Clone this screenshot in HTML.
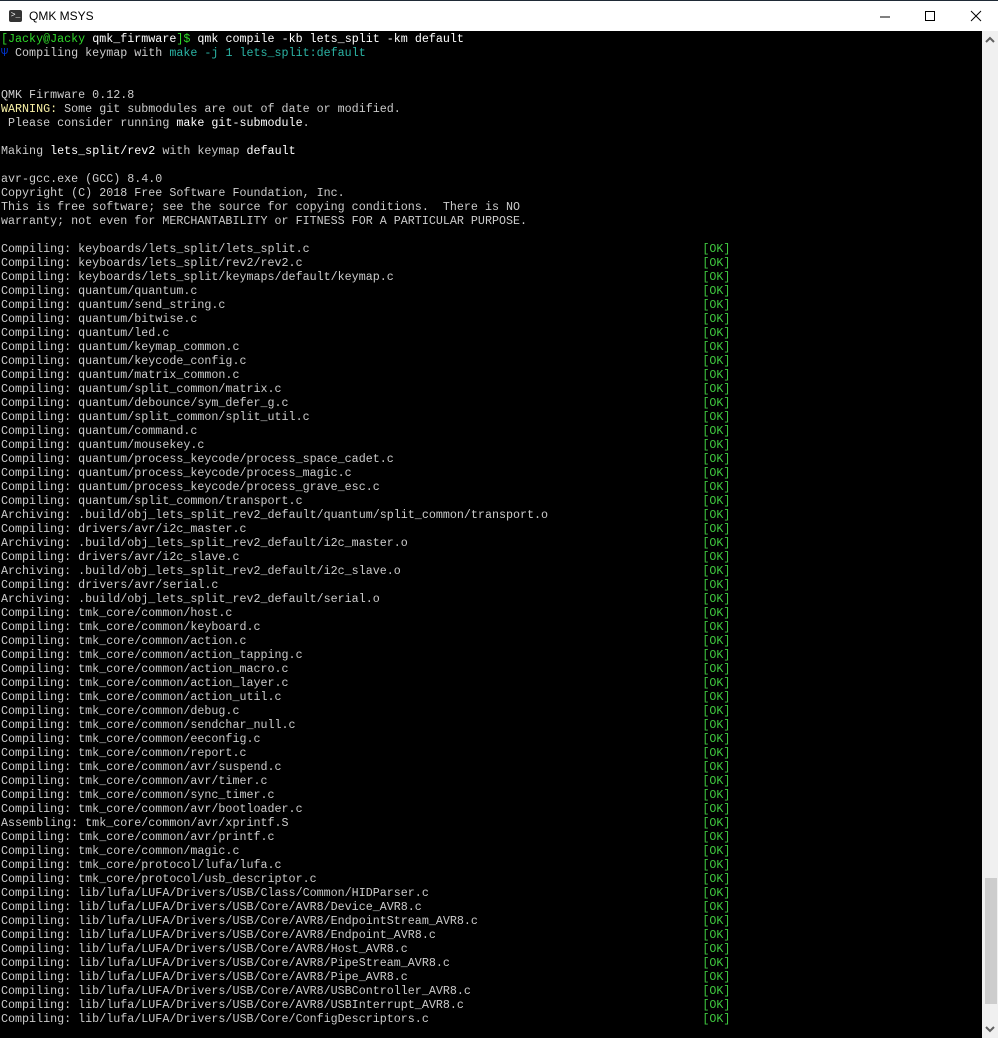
<!DOCTYPE html>
<html><head><meta charset="utf-8"><style>
html,body{margin:0;padding:0;width:998px;height:1038px;overflow:hidden;background:#000;}
#title{position:absolute;left:0;top:0;width:998px;height:31px;background:#fff;border-top:1px solid #1f2a36;box-sizing:border-box;font-family:"Liberation Sans",sans-serif;font-size:12px;color:#000;}
#title .ic{position:absolute;left:9px;top:9px;width:13px;height:12px;background:#333;border-radius:2px;color:#fff;font-size:8px;line-height:12px;font-family:"Liberation Mono",monospace;text-align:center}
#title .t{position:absolute;left:29px;top:8px;}
#term{position:absolute;left:0;top:32px;width:982px;height:1006px;background:#000;}
pre{margin:0;padding-left:1px;font-family:"Liberation Mono",monospace;font-size:11.69px;line-height:14px;color:#cccccc;white-space:pre;}
.g{color:#2fd82a}.c{color:#2bb3a4}.y{color:#f9f1a5}.w{color:#fff}.b{color:#0037da}.ok{color:#3fc83f}
#sb{position:absolute;left:982px;top:31px;width:16px;height:1007px;background:#f0f0f0;}
#thumb{position:absolute;left:985px;top:878px;width:12px;height:126px;background:#cdcdcd;}
</style></head><body>
<div id="title"><div class="ic">&gt;_</div><div class="t">QMK MSYS</div>
<svg style="position:absolute;left:870px;top:9px" width="120" height="14">
<line x1="10" y1="7" x2="20" y2="7" stroke="#000" stroke-width="1"/>
<rect x="55.5" y="1.5" width="9" height="9" fill="none" stroke="#000"/>
<line x1="101" y1="1" x2="111" y2="11" stroke="#000"/><line x1="111" y1="1" x2="101" y2="11" stroke="#000"/>
</svg></div>
<div id="term"><pre><span class="g">[Jacky@Jacky</span> <span class="w">qmk_firmware</span><span class="g">]$</span> <span class="w">qmk compile -kb lets_split -km default</span>
<span class="b">Ψ</span> Compiling keymap with <span class="c">make -j 1 lets_split:default</span>


QMK Firmware 0.12.8
<span class="y">WARNING:</span> Some git submodules are out of date or modified.
 Please consider running <span class="w">make git-submodule</span>.

Making <span class="w">lets_split/rev2</span> with keymap <span class="w">default</span>

avr-gcc.exe (GCC) 8.4.0
Copyright (C) 2018 Free Software Foundation, Inc.
This is free software; see the source for copying conditions.  There is NO
warranty; not even for MERCHANTABILITY or FITNESS FOR A PARTICULAR PURPOSE.

Compiling: keyboards/lets_split/lets_split.c                                                        <span class="ok">[OK]</span>
Compiling: keyboards/lets_split/rev2/rev2.c                                                         <span class="ok">[OK]</span>
Compiling: keyboards/lets_split/keymaps/default/keymap.c                                            <span class="ok">[OK]</span>
Compiling: quantum/quantum.c                                                                        <span class="ok">[OK]</span>
Compiling: quantum/send_string.c                                                                    <span class="ok">[OK]</span>
Compiling: quantum/bitwise.c                                                                        <span class="ok">[OK]</span>
Compiling: quantum/led.c                                                                            <span class="ok">[OK]</span>
Compiling: quantum/keymap_common.c                                                                  <span class="ok">[OK]</span>
Compiling: quantum/keycode_config.c                                                                 <span class="ok">[OK]</span>
Compiling: quantum/matrix_common.c                                                                  <span class="ok">[OK]</span>
Compiling: quantum/split_common/matrix.c                                                            <span class="ok">[OK]</span>
Compiling: quantum/debounce/sym_defer_g.c                                                           <span class="ok">[OK]</span>
Compiling: quantum/split_common/split_util.c                                                        <span class="ok">[OK]</span>
Compiling: quantum/command.c                                                                        <span class="ok">[OK]</span>
Compiling: quantum/mousekey.c                                                                       <span class="ok">[OK]</span>
Compiling: quantum/process_keycode/process_space_cadet.c                                            <span class="ok">[OK]</span>
Compiling: quantum/process_keycode/process_magic.c                                                  <span class="ok">[OK]</span>
Compiling: quantum/process_keycode/process_grave_esc.c                                              <span class="ok">[OK]</span>
Compiling: quantum/split_common/transport.c                                                         <span class="ok">[OK]</span>
Archiving: .build/obj_lets_split_rev2_default/quantum/split_common/transport.o                      <span class="ok">[OK]</span>
Compiling: drivers/avr/i2c_master.c                                                                 <span class="ok">[OK]</span>
Archiving: .build/obj_lets_split_rev2_default/i2c_master.o                                          <span class="ok">[OK]</span>
Compiling: drivers/avr/i2c_slave.c                                                                  <span class="ok">[OK]</span>
Archiving: .build/obj_lets_split_rev2_default/i2c_slave.o                                           <span class="ok">[OK]</span>
Compiling: drivers/avr/serial.c                                                                     <span class="ok">[OK]</span>
Archiving: .build/obj_lets_split_rev2_default/serial.o                                              <span class="ok">[OK]</span>
Compiling: tmk_core/common/host.c                                                                   <span class="ok">[OK]</span>
Compiling: tmk_core/common/keyboard.c                                                               <span class="ok">[OK]</span>
Compiling: tmk_core/common/action.c                                                                 <span class="ok">[OK]</span>
Compiling: tmk_core/common/action_tapping.c                                                         <span class="ok">[OK]</span>
Compiling: tmk_core/common/action_macro.c                                                           <span class="ok">[OK]</span>
Compiling: tmk_core/common/action_layer.c                                                           <span class="ok">[OK]</span>
Compiling: tmk_core/common/action_util.c                                                            <span class="ok">[OK]</span>
Compiling: tmk_core/common/debug.c                                                                  <span class="ok">[OK]</span>
Compiling: tmk_core/common/sendchar_null.c                                                          <span class="ok">[OK]</span>
Compiling: tmk_core/common/eeconfig.c                                                               <span class="ok">[OK]</span>
Compiling: tmk_core/common/report.c                                                                 <span class="ok">[OK]</span>
Compiling: tmk_core/common/avr/suspend.c                                                            <span class="ok">[OK]</span>
Compiling: tmk_core/common/avr/timer.c                                                              <span class="ok">[OK]</span>
Compiling: tmk_core/common/sync_timer.c                                                             <span class="ok">[OK]</span>
Compiling: tmk_core/common/avr/bootloader.c                                                         <span class="ok">[OK]</span>
Assembling: tmk_core/common/avr/xprintf.S                                                           <span class="ok">[OK]</span>
Compiling: tmk_core/common/avr/printf.c                                                             <span class="ok">[OK]</span>
Compiling: tmk_core/common/magic.c                                                                  <span class="ok">[OK]</span>
Compiling: tmk_core/protocol/lufa/lufa.c                                                            <span class="ok">[OK]</span>
Compiling: tmk_core/protocol/usb_descriptor.c                                                       <span class="ok">[OK]</span>
Compiling: lib/lufa/LUFA/Drivers/USB/Class/Common/HIDParser.c                                       <span class="ok">[OK]</span>
Compiling: lib/lufa/LUFA/Drivers/USB/Core/AVR8/Device_AVR8.c                                        <span class="ok">[OK]</span>
Compiling: lib/lufa/LUFA/Drivers/USB/Core/AVR8/EndpointStream_AVR8.c                                <span class="ok">[OK]</span>
Compiling: lib/lufa/LUFA/Drivers/USB/Core/AVR8/Endpoint_AVR8.c                                      <span class="ok">[OK]</span>
Compiling: lib/lufa/LUFA/Drivers/USB/Core/AVR8/Host_AVR8.c                                          <span class="ok">[OK]</span>
Compiling: lib/lufa/LUFA/Drivers/USB/Core/AVR8/PipeStream_AVR8.c                                    <span class="ok">[OK]</span>
Compiling: lib/lufa/LUFA/Drivers/USB/Core/AVR8/Pipe_AVR8.c                                          <span class="ok">[OK]</span>
Compiling: lib/lufa/LUFA/Drivers/USB/Core/AVR8/USBController_AVR8.c                                 <span class="ok">[OK]</span>
Compiling: lib/lufa/LUFA/Drivers/USB/Core/AVR8/USBInterrupt_AVR8.c                                  <span class="ok">[OK]</span>
Compiling: lib/lufa/LUFA/Drivers/USB/Core/ConfigDescriptors.c                                       <span class="ok">[OK]</span></pre></div>
<div id="sb"></div><div id="thumb"></div>
<svg style="position:absolute;left:985px;top:36px" width="10" height="8"><path d="M1 6 L5 2 L9 6" fill="none" stroke="#606060" stroke-width="2"/></svg>
<svg style="position:absolute;left:985px;top:1025px" width="10" height="8"><path d="M1 2 L5 6 L9 2" fill="none" stroke="#606060" stroke-width="2"/></svg>
</body></html>
